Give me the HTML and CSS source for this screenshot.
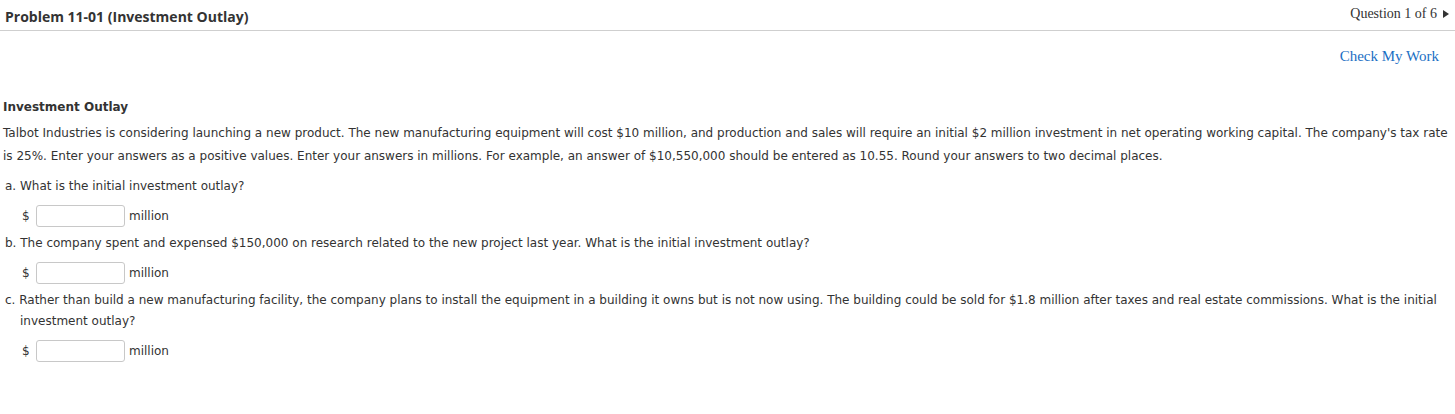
FILE: index.html
```html
<!DOCTYPE html>
<html>
<head>
<meta charset="utf-8">
<link rel="stylesheet" href="styles.css">
</head>
<body>
<header class="topbar">
  <h1 class="title">Problem 11-01 (Investment Outlay)</h1>
  <div class="qnav">Question 1 of 6 <span class="arrow"></span></div>
</header>
<div class="actions"><a class="check" href="#">Check My Work</a></div>
<main class="content">
  <h2 class="heading">Investment Outlay</h2>
  <p class="intro">Talbot Industries is considering launching a new product. The new manufacturing equipment will cost $10 million, and production and sales will require an initial $2 million investment in net operating working capital. The company's tax rate is 25%. Enter your answers as a positive values. Enter your answers in millions. For example, an answer of $10,550,000 should be entered as 10.55. Round your answers to two decimal places.</p>
  <div class="question">
    <div class="qtext"><span class="lbl">a.</span> What is the initial investment outlay?</div>
    <div class="answer"><span class="cur">$</span><input class="box" type="text"><span class="unit">million</span></div>
  </div>
  <div class="question">
    <div class="qtext"><span class="lbl">b.</span> The company spent and expensed $150,000 on research related to the new project last year. What is the initial investment outlay?</div>
    <div class="answer"><span class="cur">$</span><input class="box" type="text"><span class="unit">million</span></div>
  </div>
  <div class="question">
    <div class="qtext"><span class="lbl">c.</span> Rather than build a new manufacturing facility, the company plans to install the equipment in a building it owns but is not now using. The building could be sold for $1.8 million after taxes and real estate commissions. What is the initial investment outlay?</div>
    <div class="answer"><span class="cur">$</span><input class="box" type="text"><span class="unit">million</span></div>
  </div>
</main>
</body>
</html>
```
FILE: styles.css
```css
html, body { margin: 0; padding: 0; background: #fff; }
body { font-family: "DejaVu Sans", Verdana, sans-serif; color: #333; }

.topbar {
  display: flex;
  justify-content: space-between;
  align-items: center;
  height: 30px;
  border-bottom: 1px solid #cfcfcf;
  padding: 0 3px 0 5px;
}
.title {
  margin: 0;
  font-family: "Open Sans", sans-serif;
  font-weight: 700;
  font-size: 14px;
  color: #333;
  padding-top: 3px;
}
.qnav {
  font-family: "Liberation Serif", serif;
  font-size: 14px;
  color: #333;
  display: flex;
  align-items: center;
  gap: 6px;
  padding-right: 3px;
  padding-bottom: 2px;
}
.arrow {
  width: 0; height: 0;
  border-left: 6px solid #333;
  border-top: 4px solid transparent;
  border-bottom: 4px solid transparent;
}
.actions {
  display: flex;
  justify-content: flex-end;
  padding: 17px 16px 0 0;
}
.check {
  font-family: "Liberation Serif", serif;
  font-size: 15px;
  color: #1a6fc4;
  text-decoration: none;
}
.content {
  padding: 32px 3px 0 3px;
  font-size: 12px;
}
.heading {
  margin: 0;
  font-size: 12px;
  font-weight: 700;
  line-height: 20px;
}
.intro {
  margin: 5px 0 0 0;
  line-height: 23px;
}
.question { margin-top: 8px; }
.question + .question { margin-top: 6px; }
.qtext {
  line-height: 21px;
  padding-left: 17px;
  text-indent: -15px;
  margin-left: 0;
}
.answer {
  display: flex;
  align-items: center;
  height: 22px;
  margin: 8px 0 5px 0;
  padding-left: 19px;
}
.cur { width: 14px; }
.box {
  width: 89px;
  height: 22px;
  box-sizing: border-box;
  border: 1px solid #c8c8c8;
  border-radius: 3px;
  margin: 0 4px 0 0;
  padding: 0;
}
```
